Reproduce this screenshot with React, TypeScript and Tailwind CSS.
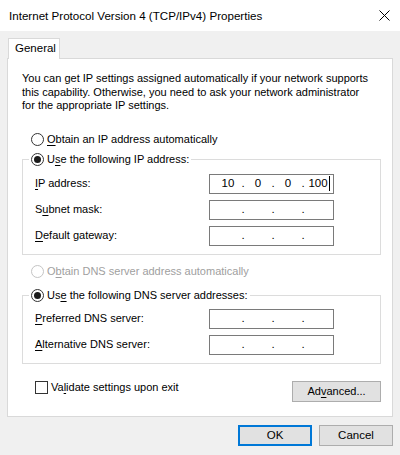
import React from "react";

const FONT = { fontFamily: '"Liberation Sans", Arial, sans-serif' };

function U({ children }: { children: React.ReactNode }) {
  return <span className="underline decoration-1 underline-offset-[2px]">{children}</span>;
}

function Radio({ checked = false, disabled = false }: { checked?: boolean; disabled?: boolean }) {
  return (
    <span
      className={
        disabled
          ? "w-[13px] h-[13px] shrink-0 rounded-full border border-[#c4c4c4] bg-white flex items-center justify-center"
          : "w-[13px] h-[13px] shrink-0 rounded-full border border-[#333333] bg-white flex items-center justify-center"
      }
    >
      {checked && <span className="w-[7px] h-[7px] rounded-full bg-[#1b1b1b]" />}
    </span>
  );
}

function IpBox({ values, cursor = false }: { values?: string[]; cursor?: boolean }) {
  const v = values ?? ["", "", "", ""];
  return (
    <div className="w-[125px] h-[20px] border border-[#7a7a7a] bg-white flex items-center pl-[5px] text-black text-[11.5px]">
      <span className="w-[26px] text-center">{v[0]}</span>
      <span className="w-[4px] text-center">.</span>
      <span className="w-[26px] text-center">{v[1]}</span>
      <span className="w-[4px] text-center">.</span>
      <span className="w-[26px] text-center">{v[2]}</span>
      <span className="w-[4px] text-center">.</span>
      <span className="w-[26px] flex items-center justify-center">
        {v[3]}
        {cursor && <span className="inline-block w-px h-[15px] bg-black ml-[1px] -mr-[2px]" />}
      </span>
    </div>
  );
}

function Row({ label, children }: { label: React.ReactNode; children: React.ReactNode }) {
  return (
    <div className="flex items-center h-[20px]">
      <span className="w-[174px] shrink-0">{label}</span>
      {children}
    </div>
  );
}

export default function App() {
  return (
    <div className="w-[400px] h-[455px] bg-[#f0f0f0] text-[11px] text-black flex flex-col overflow-hidden whitespace-nowrap" style={FONT}>
      {/* Title bar */}
      <div className="h-[31px] bg-white flex items-center justify-between pl-[9px] pr-[10px] shrink-0">
        <span className="text-[11.6px]">Internet Protocol Version 4 (TCP/IPv4) Properties</span>
        <svg width="11" height="11" viewBox="0 0 11 11" className="block">
          <path d="M0.5 0.5 L10.5 10.5 M10.5 0.5 L0.5 10.5" stroke="#000" strokeWidth="1" fill="none" />
        </svg>
      </div>

      {/* Body */}
      <div className="flex flex-col px-[7px] pt-[7px]">
        {/* Tab strip */}
        <div className="flex pl-[1px]">
          <div className="w-[52px] h-[21px] bg-white border border-b-0 border-[#d9d9d9] flex items-center pl-[6px] -mb-px relative z-10 text-[11.5px]">
            General
          </div>
        </div>

        {/* Panel */}
        <div className="w-[386px] h-[359px] bg-white border border-[#d9d9d9] flex flex-col pl-[14px] pr-[11px] pt-[13px]">
          <p className="leading-[13.5px]">
            You can get IP settings assigned automatically if your network supports
            <br />
            this capability. Otherwise, you need to ask your network administrator
            <br />
            for the appropriate IP settings.
          </p>

          <div className="flex items-center gap-[3px] h-[16px] mt-[19px] pl-[9px]">
            <Radio />
            <span>
              <U>O</U>btain an IP address automatically
            </span>
          </div>

          <fieldset className="border border-[#dcdcdc] mt-[4px] p-0 m-0 min-w-0">
            <legend className="ml-[6px] px-[2px] flex items-center gap-[3px] h-[16px]">
              <Radio checked />
              <span>
                U<U>s</U>e the following IP address:
              </span>
            </legend>
            <div className="flex flex-col gap-[6px] pl-[12px] pt-[6px] pb-[8px]">
              <Row label={<><U>I</U>P address:</>}>
                <IpBox values={["10", "0", "0", "100"]} cursor />
              </Row>
              <Row label={<>S<U>u</U>bnet mask:</>}>
                <IpBox />
              </Row>
              <Row label={<><U>D</U>efault gateway:</>}>
                <IpBox />
              </Row>
            </div>
          </fieldset>

          <div className="flex items-center gap-[3px] h-[16px] mt-[9px] pl-[9px] text-[#a0a0a0]">
            <Radio disabled />
            <span>
              O<U>b</U>tain DNS server address automatically
            </span>
          </div>

          <fieldset className="border border-[#dcdcdc] mt-[8px] p-0 m-0 min-w-0">
            <legend className="ml-[6px] px-[2px] flex items-center gap-[3px] h-[16px]">
              <Radio checked />
              <span>
                Us<U>e</U> the following DNS server addresses:
              </span>
            </legend>
            <div className="flex flex-col gap-[6px] pl-[12px] pt-[5px] pb-[8px]">
              <Row label={<><U>P</U>referred DNS server:</>}>
                <IpBox />
              </Row>
              <Row label={<><U>A</U>lternative DNS server:</>}>
                <IpBox />
              </Row>
            </div>
          </fieldset>

          <div className="flex items-start justify-between mt-[17px] pl-[13px]">
            <div className="flex items-center gap-[3px] h-[13px]">
              <span className="w-[13px] h-[13px] border border-[#333333] bg-white shrink-0" />
              <span>
                Va<U>l</U>idate settings upon exit
              </span>
            </div>
            <button className="w-[89px] h-[21px] bg-[#e1e1e1] border border-[#adadad] flex items-center justify-center">
              Ad<U>v</U>anced...
            </button>
          </div>
        </div>

        {/* Buttons */}
        <div className="flex justify-end gap-[7px] mt-[8px] pr-[0px]">
          <button className="w-[74px] h-[21px] bg-[#e1e1e1] border-2 border-[#0078d7] flex items-center justify-center text-[11.5px]">
            OK
          </button>
          <button className="w-[74px] h-[21px] bg-[#e1e1e1] border border-[#adadad] flex items-center justify-center text-[11.5px]">
            Cancel
          </button>
        </div>
      </div>
    </div>
  );
}
